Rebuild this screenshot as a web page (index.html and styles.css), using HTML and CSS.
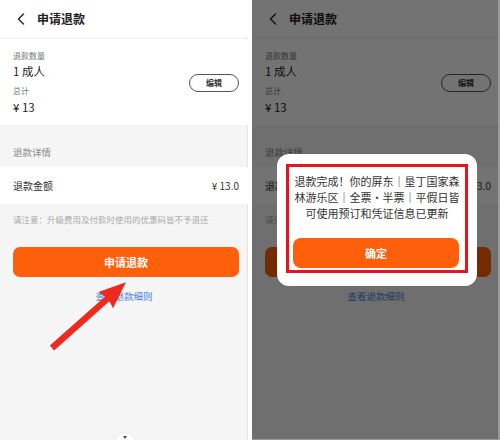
FILE: index.html
```html
<!DOCTYPE html>
<html lang="zh-CN">
<head>
<meta charset="utf-8">
<title>申请退款</title>
<link rel="stylesheet" href="styles.css">
</head>
<body>
<div class="stage">
  <!-- refund form -->
  <section class="phone phone--edge">
    <header class="topbar">
      <svg class="back" width="8" height="12" viewBox="0 0 8 12"><path d="M6.5 1 L1.5 6 L6.5 11" fill="none" stroke="#333" stroke-width="1.6" stroke-linecap="round" stroke-linejoin="round"/></svg>
      <h1 class="title">申请退款</h1>
    </header>
    <div class="summary">
      <div class="fields">
        <div class="field-label">退款数量</div>
        <div class="field-value">1 成人</div>
        <div class="field-label field-label--gap">总计</div>
        <div class="field-value field-value--tight">¥ 13</div>
      </div>
      <button class="edit-btn">编辑</button>
    </div>
    <div class="section-title">退款详情</div>
    <div class="amount-row"><span>退款金额</span><span>¥ 13.0</span></div>
    <p class="note">请注意：升级费用及付款时使用的优惠码皆不予退还</p>
    <button class="primary-btn">申请退款</button>
    <div class="rules-link">查看退款细则</div>

    <svg class="pointer-arrow" width="248" height="440" viewBox="0 0 248 440">
      <polygon points="0,-3.2 74,-3.2 72,-11 99,0 72,11 74,3.2 0,3.2" fill="#ec2a1e" transform="translate(52 348) rotate(-41.7)"/>
    </svg>
    <div class="pull-tab"><span class="pull-tab__mark"></span></div>
  </section>

  <!-- same form with the confirmation dialog open -->
  <section class="phone phone--frame">
    <header class="topbar">
      <svg class="back" width="8" height="12" viewBox="0 0 8 12"><path d="M6.5 1 L1.5 6 L6.5 11" fill="none" stroke="#333" stroke-width="1.6" stroke-linecap="round" stroke-linejoin="round"/></svg>
      <h1 class="title">申请退款</h1>
    </header>
    <div class="summary">
      <div class="fields">
        <div class="field-label">退款数量</div>
        <div class="field-value">1 成人</div>
        <div class="field-label field-label--gap">总计</div>
        <div class="field-value field-value--tight">¥ 13</div>
      </div>
      <button class="edit-btn">编辑</button>
    </div>
    <div class="section-title">退款详情</div>
    <div class="amount-row"><span>退款金额</span><span>¥ 13.0</span></div>
    <p class="note">请注意：升级费用及付款时使用的优惠码皆不予退还</p>
    <button class="primary-btn">申请退款</button>
    <div class="rules-link">查看退款细则</div>

    <div class="scrim"></div>
    <div class="dialog">
      <div class="dialog__frame">
        <p class="dialog__text">退款完成！你的屏东｜垦丁国家森林游乐区｜全票・半票｜平假日皆可使用预订和凭证信息已更新</p>
        <button class="dialog__btn">确定</button>
      </div>
    </div>
  </section>
</div>
</body>
</html>
```

FILE: styles.css
```css
* {
  box-sizing: border-box;
}

body {
  margin: 0;
  background: #fff;
  font-family: "Noto Sans CJK SC", "Noto Sans", sans-serif;
  color: #222;
}

button {
  font-family: inherit;
  border: 0;
  padding: 0;
}

.stage {
  display: flex;
  gap: 4px;
  width: 500px;
  height: 440px;
}

.phone {
  position: relative;
  width: 248px;
  height: 440px;
  overflow: hidden;
  background: #f5f5f5;
}

.phone--edge {
  box-shadow: inset -1px 0 0 #e4e4e4;
}

/* header */
.topbar {
  height: 37px;
  background: #fff;
  display: flex;
  align-items: center;
  padding-left: 17px;
  gap: 12px;
}

.title {
  margin: 0;
  font-size: 12px;
  font-weight: 700;
  color: #222;
  line-height: 16px;
}

/* ticket summary */
.summary {
  margin-top: 2px;
  background: #fff;
  display: flex;
  align-items: center;
  justify-content: space-between;
  padding: 11px 9px 10px 13px;
}

.field-label {
  font-size: 8px;
  line-height: 12px;
  color: #777;
}

.field-label--gap {
  margin-top: 6px;
}

.field-value {
  margin-top: 1px;
  font-size: 11.5px;
  line-height: 16px;
  color: #222;
}

.field-value--tight {
  margin-top: 2px;
}

.edit-btn {
  width: 50px;
  height: 18px;
  border: 1.5px solid #555;
  border-radius: 9px;
  background: #fff;
  font-size: 8px;
  font-weight: 700;
  color: #333;
  display: flex;
  align-items: center;
  justify-content: center;
}

/* refund details */
.section-title {
  padding: 20px 13px 8px;
  font-size: 9.5px;
  line-height: 14px;
  color: #888;
}

.amount-row {
  height: 37px;
  background: #fff;
  display: flex;
  align-items: center;
  justify-content: space-between;
  padding: 0 9px 0 13px;
  font-size: 10px;
  color: #333;
}

.note {
  margin: 9px 13px 0;
  font-size: 8.5px;
  line-height: 12px;
  color: #aaa;
  white-space: nowrap;
}

.primary-btn {
  display: flex;
  align-items: center;
  justify-content: center;
  width: 226px;
  height: 30px;
  margin: 22px 0 0 13px;
  border-radius: 7px;
  background: #fe5f0a;
  color: #fff;
  font-size: 11px;
  font-weight: 700;
}

.rules-link {
  margin-top: 12px;
  text-align: center;
  font-size: 9.5px;
  line-height: 14px;
  color: #4a80d8;
}

/* annotation arrow drawn over the page */
.pointer-arrow {
  position: absolute;
  left: 0;
  top: 0;
  pointer-events: none;
}

/* small pull tab peeking at the bottom edge */
.pull-tab {
  position: absolute;
  left: 115px;
  top: 433px;
  width: 20px;
  height: 20px;
  border-radius: 50%;
  background: #fff;
  box-shadow: 0 0 2px rgba(0, 0, 0, 0.12);
  display: flex;
  justify-content: center;
}

.pull-tab__mark {
  margin-top: 3px;
  width: 0;
  height: 0;
  border-left: 2.5px solid transparent;
  border-right: 2.5px solid transparent;
  border-top: 3.5px solid #444;
}

/* modal */
.scrim {
  position: absolute;
  inset: 0;
  background: rgba(0, 0, 0, 0.55);
}

.phone--frame::after {
  content: "";
  position: absolute;
  inset: 0;
  box-shadow: inset -2px 0 0 #9a9a9a, inset 0 -1px 0 #9a9a9a;
  pointer-events: none;
}

.dialog {
  position: absolute;
  left: 25px;
  top: 154px;
  width: 200px;
  background: #fff;
  border-radius: 12px;
  padding: 10px 9px 13px;
}

.dialog__frame {
  border: 3px solid #e8141c;
  padding: 6px 0 2px;
  display: flex;
  flex-direction: column;
  align-items: center;
}

.dialog__text {
  margin: 0;
  width: 168px;
  font-size: 11px;
  line-height: 16px;
  color: #333;
  text-align: center;
}

.dialog__btn {
  margin-top: 17px;
  margin-right: 2px;
  width: 166px;
  height: 30px;
  border-radius: 8px;
  background: #fe5f0a;
  color: #fff;
  font-size: 11px;
  font-weight: 700;
  display: flex;
  align-items: center;
  justify-content: center;
}
```
